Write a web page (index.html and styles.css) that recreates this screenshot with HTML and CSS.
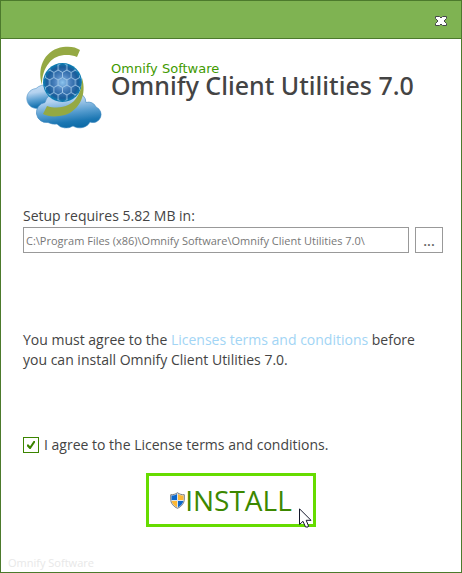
FILE: index.html
```html
<!DOCTYPE html>
<html lang="en">
<head>
<meta charset="utf-8">
<meta name="viewport" content="width=device-width, initial-scale=1">
<title>Omnify Client Utilities 7.0</title>
<link rel="stylesheet" href="styles.css">
</head>
<body>
<div class="window">
  <header class="titlebar">
    <button class="close" type="button" aria-label="Close">
      <svg width="12" height="10" viewBox="0 0 12 10" aria-hidden="true">
        <path d="M.5.5H4.5L6 2 7.500.5H11.500V2.500L9 5 11.500 7.500V9.500H7.500L6 8 4.500 9.500H.5V7.500L3 5 .5 2.500Z" fill="#fff" stroke="#46494a"/>
      </svg>
    </button>
  </header>
  <main class="content">
    <div class="brand">
      <svg class="logo" width="80" height="84" viewBox="23 45 80 84" aria-hidden="true">
        <defs>
          <linearGradient id="cloud" x1="0.3" y1="0" x2="0.5" y2="1">
            <stop offset="0" stop-color="#c5dcf3"/><stop offset=".3" stop-color="#b4d2ef"/><stop offset=".6" stop-color="#5a9fd1"/><stop offset=".85" stop-color="#1c77b3"/><stop offset="1" stop-color="#0d6ba7"/>
          </linearGradient>
          <radialGradient id="globe">
            <stop offset="0" stop-color="#8cc4ee"/><stop offset=".4" stop-color="#4a80bd"/><stop offset=".8" stop-color="#1a5c9a"/><stop offset="1" stop-color="#0a80b4"/>
          </radialGradient>
          <pattern id="hex" x="58.200" y="75" width="8.600" height="15" patternUnits="userSpaceOnUse">
            <path d="M4.300 0V2.500L8.600 5V10L4.300 12.500V15M4.300 2.500L0 5V10L4.300 12.500" fill="none" stroke="#a5cbea" stroke-width=".9"/>
          </pattern>
        </defs>
        <path d="M42 107A10 10 0 1 1 36 88.500A13 11 0 0 1 58 92V108C52 110 46 109 42 107Z" fill="url(#cloud)" stroke="#4f93c8" stroke-width=".6"/>
        <path d="M48 122.500A10 10 0 0 1 45 102.500A20 17 0 0 1 76 92A11 11 0 0 1 86 102.500A8 8 0 0 1 96 107A8 8 0 0 1 90 122A11 9 0 0 1 73 126A11 9 0 0 1 57 124A12 9 0 0 1 48 122.500Z" fill="url(#cloud)" stroke="#3a87bf" stroke-width=".6"/>
        <path d="M42 85C36 65 47 49 63 47C70 46 76 47 80 50L77 57C67 53 55 55 49 63C44 69 42 76 42 85Z" fill="#95a943"/>
        <circle cx="62.500" cy="82.500" r="19.500" fill="url(#globe)"/>
        <circle cx="62.500" cy="82.500" r="18.500" fill="url(#hex)"/>
        <path d="M82 78C87 94 80 110 65 115C57 117 48 117 43 114L47 106C59 110 72 106 77 97C81 91 82 85 82 78Z" fill="#95a943"/>
      </svg>
      <div class="names">
        <p class="vendor">Omnify Software</p>
        <h1>Omnify Client Utilities 7.0</h1>
      </div>
    </div>
    <div class="location">
      <label for="path">Setup requires 5.82 MB in:</label>
      <div class="path-row">
        <input id="path" class="path" type="text" value="C:\Program Files (x86)\Omnify Software\Omnify Client Utilities 7.0\">
        <button class="browse" type="button" aria-label="Browse">...</button>
      </div>
    </div>
    <p class="terms">You must agree to the <a href="#">Licenses terms and conditions</a> before you can install Omnify Client Utilities 7.0.</p>
    <div class="agree">
      <input id="agree" type="checkbox" checked>
      <label for="agree">I agree to the License terms and conditions.</label>
    </div>
    <button class="install" type="button">
      <svg width="15" height="17" viewBox="0 0 15 17" aria-hidden="true">
        <path d="M7.500.7C5.500 2.300 3 2.800.7 2.700V7C.7 11.500 3.500 14.500 7.500 16.300 11.500 14.500 14.300 11.500 14.300 7V2.700C12 2.800 9.500 2.300 7.500.7Z" fill="#dde3e8" stroke="#7b7e80"/>
        <path d="M7 2C5.300 3.100 3.500 3.500 1.500 3.500V8H7Z" fill="#0c66cb"/>
        <path d="M8 2C9.700 3.100 11.500 3.500 13.500 3.500V8H8Z" fill="#fcb735"/>
        <path d="M1.600 9H7V15.200C4.100 13.800 2.100 11.600 1.600 9Z" fill="#fcb735"/>
        <path d="M13.400 9H8V15.200C10.900 13.800 12.900 11.600 13.400 9Z" fill="#0c66cb"/>
      </svg>
      <span>INSTALL</span>
      <svg class="pointer" width="13" height="20" viewBox="0 0 13 20" aria-hidden="true">
        <path d="M.5.8V16.500L4 13.300 6.500 19H9L9.500 18 7.200 12.300H12Z" fill="#fff" stroke="#15182b"/>
      </svg>
    </button>
  </main>
  <footer class="footer">Omnify Software</footer>
</div>
</body>
</html>
```
FILE: styles.css
```css
* { box-sizing: border-box; }

body {
  margin: 0;
  font: 14px/20px "Open Sans", "Noto Sans", sans-serif;
  color: #444;
}

p, h1 { margin: 0; }

button { padding: 0; cursor: pointer; }

.window {
  display: flex;
  flex-direction: column;
  min-height: 100vh;
  border: 1px solid #4c7a2c;
  background: #fff;
}

.titlebar {
  display: flex;
  justify-content: flex-end;
  align-items: center;
  height: 38px;
  padding: 2px 14px 0;
  background: #7fb352;
  border-bottom: 1px solid #4c7a2c;
}

.close {
  display: flex;
  border: 0;
  background: none;
}

.content {
  flex: 1;
  display: flex;
  flex-direction: column;
  padding: 6px 18px 0 22px;
}

.brand { display: flex; gap: 8px; }

.logo { flex: none; }

.names { padding-top: 16px; }

.vendor {
  font: 13px/16px "DejaVu Sans", sans-serif;
  color: #3f9a00;
}

h1 {
  font: 500 25px/16px "Noto Sans", sans-serif;
  color: #444;
}

.location { margin-top: 77px; }

.location label { display: block; }

.path-row {
  display: flex;
  gap: 6px;
  margin-top: 1px;
}

.path {
  flex: 1;
  min-width: 0;
  height: 26px;
  padding: 0 2px;
  border: 1px solid #999;
  background: #fff;
  color: #777;
  font: 11px "Open Sans", sans-serif;
}

.browse {
  width: 28px;
  border: 1px solid #999;
  background: #fff;
  color: #666;
  font: 600 14px "Open Sans", sans-serif;
}

.terms {
  margin-top: 77px;
  padding-right: 20px;
}

.terms a { color: #a2d5f5; text-decoration: none; }

.agree {
  display: flex;
  align-items: center;
  gap: 5px;
  margin-top: 65px;
}

.agree input {
  appearance: none;
  display: grid;
  place-items: center;
  width: 16px;
  height: 16px;
  margin: 0;
  border: 1px solid #3c8500;
}

.agree input:checked::before {
  content: "";
  width: 8px;
  height: 8px;
  background: #3c8500;
  clip-path: polygon(0 45%, 20% 45%, 38% 65%, 82% 0, 100% 0, 100% 20%, 45% 100%, 32% 100%, 0 65%);
}

.install {
  position: relative;
  display: flex;
  align-items: center;
  justify-content: center;
  align-self: center;
  width: 170px;
  height: 54px;
  margin: 18px 4px 0 0;
  border: 3px solid #66dc00;
  background: #fff;
  color: #3c8800;
  font: 28px "Open Sans", sans-serif;
}

.pointer {
  position: absolute;
  right: 1px;
  bottom: -4px;
}

.footer {
  padding: 0 7px;
  font: 11px/18px "Open Sans", sans-serif;
  color: #e8e8e8;
}
```
